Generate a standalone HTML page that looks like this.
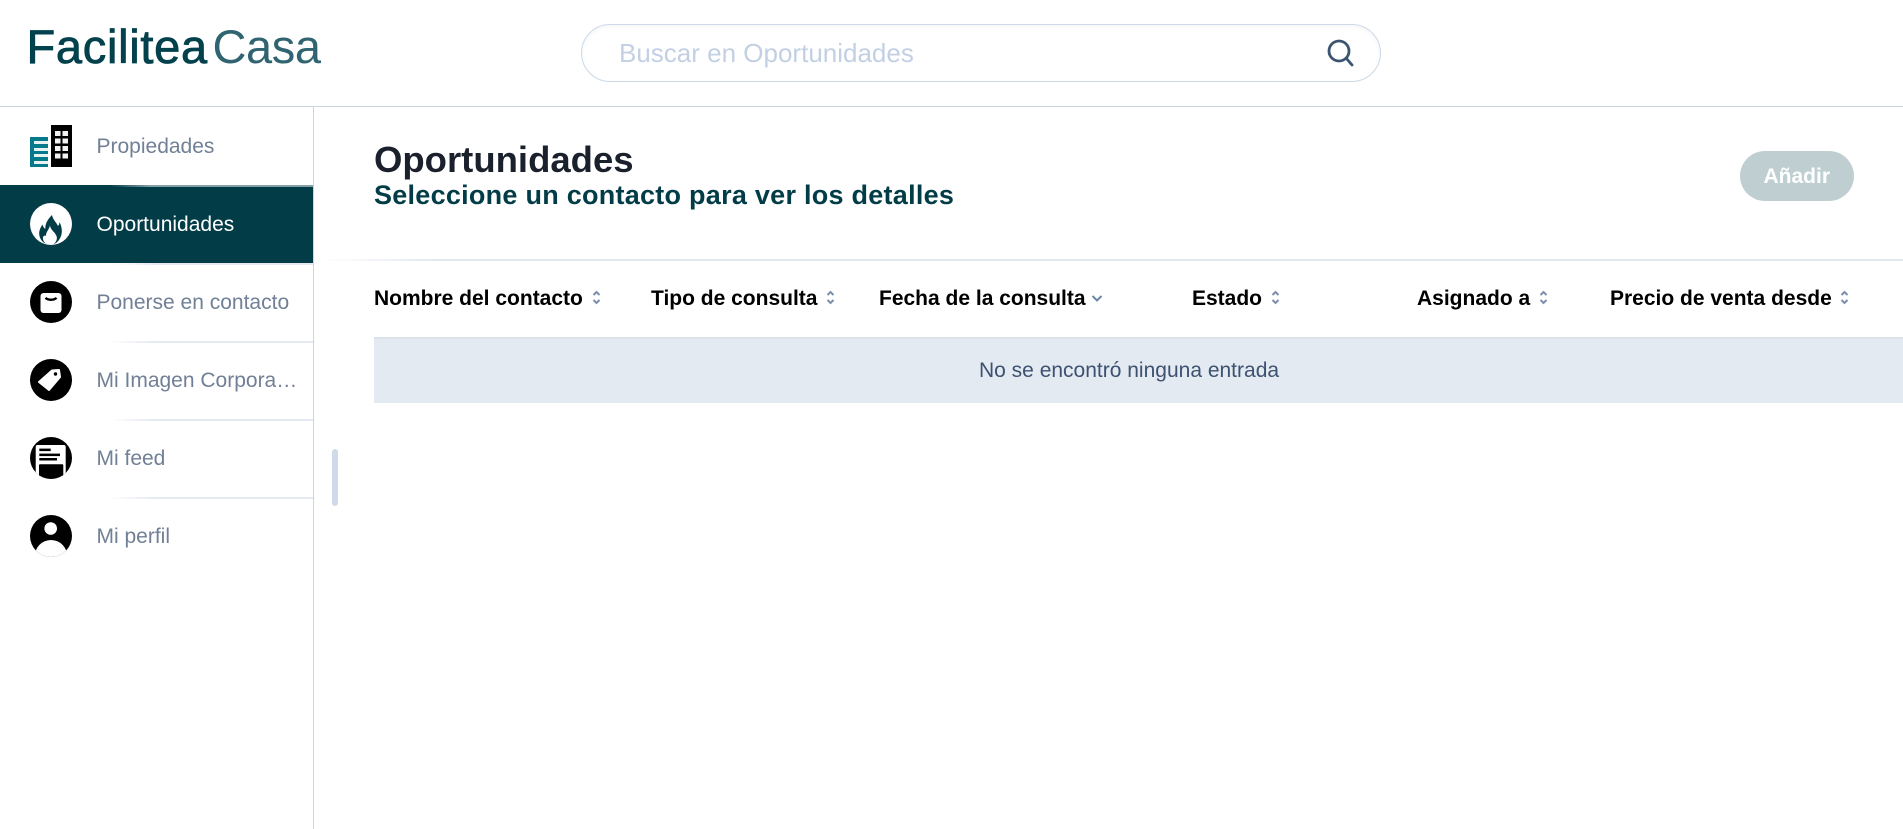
<!DOCTYPE html>
<html lang="es"><head><meta charset="utf-8"><title>Oportunidades</title>
<style>
*{box-sizing:border-box}
html,body{margin:0;padding:0;width:1903px;height:829px;overflow:hidden;background:#fff;font-family:"Liberation Sans",Arial,sans-serif}
.a{position:absolute}
.t{position:absolute;white-space:nowrap;line-height:1}
.nav{font-size:21px;color:#718096;left:96.5px}
.th{font-size:21px;font-weight:700;color:#000;top:288px}
.sep{position:absolute;left:0;width:313px;height:2px;background:linear-gradient(90deg,#fff 0,#fff 110px,#e4e9f2 155px,#e4e9f2 100%)}
svg{position:absolute;display:block}
</style></head><body>

<!-- header -->
<div class="t" style="left:26.5px;top:23px;font-size:47px;color:#03414d;-webkit-text-stroke:.8px #03414d;letter-spacing:.7px">Facilitea</div>
<div class="t" style="left:212.5px;top:23px;font-size:47px;color:#2f6470;letter-spacing:-.4px">Casa</div>
<div class="a" style="left:0;top:106px;width:1903px;height:1px;background:#cbd5e0"></div>

<div class="a" style="left:581px;top:24px;width:800px;height:58px;border:1px solid #cbd9e8;border-radius:29px;box-shadow:inset 0 2px 4px rgba(0,0,0,.04)"></div>
<div class="t" style="left:619px;top:39.5px;font-size:26px;color:#c3d0e4">Buscar en Oportunidades</div>
<svg style="left:1325px;top:37px" width="32" height="32" viewBox="0 0 32 32" fill="none" stroke="#3b5470" stroke-width="2.8" stroke-linecap="round"><circle cx="14" cy="14" r="10"/><path d="M21.5 21.5L27 28"/></svg>

<!-- sidebar -->
<div class="a" style="left:313px;top:106px;width:1px;height:723px;background:#cbd5e0"></div>
<div class="a" style="left:332px;top:449px;width:6px;height:57px;border-radius:3px;background:#cfdbe8"></div>

<div class="a" style="left:30px;top:137px;width:18px;height:30px;background:#047a8a"></div>
<div class="a" style="left:34px;top:141px;width:14px;height:3px;background:#e8f2f3"></div>
<div class="a" style="left:34px;top:147.5px;width:14px;height:3px;background:#e8f2f3"></div>
<div class="a" style="left:34px;top:154px;width:14px;height:3px;background:#e8f2f3"></div>
<div class="a" style="left:34px;top:160.5px;width:14px;height:3px;background:#e8f2f3"></div>
<svg style="left:51px;top:125px" width="21" height="42" viewBox="0 0 21 42"><rect width="21" height="42" fill="#000"/><g fill="#f2f2f2"><rect x="4" y="6" width="5.5" height="5"/><rect x="11.5" y="6" width="5.5" height="5"/><rect x="4" y="13.5" width="5.5" height="5"/><rect x="11.5" y="13.5" width="5.5" height="5"/><rect x="4" y="21" width="5.5" height="5"/><rect x="11.5" y="21" width="5.5" height="5"/><rect x="4" y="28.5" width="5.5" height="5"/><rect x="11.5" y="28.5" width="5.5" height="5"/></g></svg>
<div class="t nav" style="top:136px">Propiedades</div>

<div class="a" style="left:0;top:185px;width:313px;height:78px;background:#023c47"></div>
<div class="a" style="left:0;top:185px;width:313px;height:2px;background:linear-gradient(90deg,#023c47 0,#023c47 110px,#84a0a8 150px,#84a0a8 100%)"></div>
<svg style="left:30px;top:203px" width="42" height="42" viewBox="0 0 42 42"><circle cx="21" cy="21" r="21" fill="#fff"/><path fill="#023c47" d="M22 12C23 17 26.5 19.5 28 23C29 22 29.5 20.5 29.5 19C32 24 32.5 29 31 33C29.5 37 27 40 24 41L17 41C13 40 10.5 37 9.5 33C8.5 29 10 25 12.5 21.5C12.8 23.5 14 25 15.3 26C15 20 18.5 15.5 22 12Z"/><path fill="#fff" d="M20 22.5C20.5 27 25 29 26.5 33C27.8 36.5 25.5 40 23 41.5L17.5 41.5C14.5 40 12.5 37.5 13 34C14 32.5 15 32 16 33C15.8 29 18.8 27 20 22.5Z"/></svg>
<div class="t nav" style="top:214px;color:#fff">Oportunidades</div>

<div class="sep" style="top:263px"></div>
<svg style="left:30px;top:281px" width="42" height="42" viewBox="0 0 42 42"><circle cx="21" cy="21" r="21" fill="#000"/><rect x="10.5" y="12" width="21" height="20" rx="3" fill="#fff"/><path d="M15.5 16.8C18 19.4 24 19.4 26.5 16.8" fill="none" stroke="#000" stroke-width="2.4"/></svg>
<div class="t nav" style="top:292px">Ponerse en contacto</div>

<div class="sep" style="top:341px"></div>
<svg style="left:30px;top:359px" width="42" height="42" viewBox="0 0 42 42"><circle cx="21" cy="21" r="21" fill="#000"/><path fill="#fff" stroke="#fff" stroke-width="2" stroke-linejoin="round" d="M9 23L22 11.5L29 11L30 18L19 31Z"/><circle cx="25.5" cy="15" r="1.7" fill="#000"/></svg>
<div class="t nav" style="top:370px;width:203px;overflow:hidden;text-overflow:ellipsis;line-height:24px;margin-top:-1.5px">Mi Imagen Corporativa</div>

<div class="sep" style="top:419px"></div>
<svg style="left:30px;top:437px" width="42" height="42" viewBox="0 0 42 42"><defs><clipPath id="c1"><circle cx="21" cy="21" r="21"/></clipPath></defs><circle cx="21" cy="21" r="21" fill="#000"/><g clip-path="url(#c1)"><rect x="5.7" y="8" width="30" height="34" rx="2" fill="#fff"/><rect x="9" y="27.3" width="24.3" height="15" rx="1" fill="#000"/><rect x="9.3" y="11.6" width="11.4" height="2.5" fill="#000"/><rect x="9.3" y="16.6" width="20.7" height="2.5" fill="#000"/><rect x="9.3" y="21" width="17.7" height="2.5" fill="#000"/></g></svg>
<div class="t nav" style="top:448px">Mi feed</div>

<div class="sep" style="top:497px"></div>
<svg style="left:30px;top:515px" width="42" height="42" viewBox="0 0 42 42"><defs><clipPath id="c2"><circle cx="21" cy="21" r="21"/></clipPath></defs><circle cx="21" cy="21" r="21" fill="#000"/><g clip-path="url(#c2)"><circle cx="20.7" cy="13.5" r="6.3" fill="#fff"/><ellipse cx="21" cy="42" rx="16.5" ry="17" fill="#fff"/></g></svg>
<div class="t nav" style="top:526px">Mi perfil</div>

<!-- main -->
<div class="t" style="left:374px;top:142px;font-size:36.5px;font-weight:700;color:#1a202c">Oportunidades</div>
<div class="t" style="left:374px;top:182px;font-size:27px;font-weight:700;color:#023c47;letter-spacing:.26px">Seleccione un contacto para ver los detalles</div>

<div class="a" style="left:1740px;top:151px;width:114px;height:50px;border-radius:25px;background:#bfcfd1"></div>
<div class="t" style="left:1763.5px;top:166px;font-size:21px;font-weight:700;color:#fff">Añadir</div>

<div class="a" style="left:320px;top:259px;width:1583px;height:2px;background:linear-gradient(90deg,#fff 0,#e2e8f0 120px,#e2e8f0 100%)"></div>

<div class="t th" style="left:374px">Nombre del contacto</div>
<div class="t th" style="left:651px">Tipo de consulta</div>
<div class="t th" style="left:879px">Fecha de la consulta</div>
<div class="t th" style="left:1192px">Estado</div>
<div class="t th" style="left:1417px">Asignado a</div>
<div class="t th" style="left:1610px">Precio de venta desde</div>

<svg style="left:592px;top:290px" width="9" height="15" viewBox="0 0 9 15" fill="none" stroke="#7b8eab" stroke-width="2"><path d="M1.5 5L4.5 2L7.5 5M1.5 10L4.5 13L7.5 10"/></svg>
<svg style="left:826px;top:290px" width="9" height="15" viewBox="0 0 9 15" fill="none" stroke="#7b8eab" stroke-width="2"><path d="M1.5 5L4.5 2L7.5 5M1.5 10L4.5 13L7.5 10"/></svg>
<svg style="left:1091px;top:294px" width="12" height="9" viewBox="0 0 12 9" fill="none" stroke="#6a86ad" stroke-width="2"><path d="M1.5 2L6 6.5L10.5 2"/></svg>
<svg style="left:1271px;top:290px" width="9" height="15" viewBox="0 0 9 15" fill="none" stroke="#7b8eab" stroke-width="2"><path d="M1.5 5L4.5 2L7.5 5M1.5 10L4.5 13L7.5 10"/></svg>
<svg style="left:1539px;top:290px" width="9" height="15" viewBox="0 0 9 15" fill="none" stroke="#7b8eab" stroke-width="2"><path d="M1.5 5L4.5 2L7.5 5M1.5 10L4.5 13L7.5 10"/></svg>
<svg style="left:1840px;top:290px" width="9" height="15" viewBox="0 0 9 15" fill="none" stroke="#7b8eab" stroke-width="2"><path d="M1.5 5L4.5 2L7.5 5M1.5 10L4.5 13L7.5 10"/></svg>

<div class="a" style="left:374px;top:337px;width:1529px;height:66px;background:#e4eaf2;border-top:2px solid #dde3ec"></div>
<div class="t" style="left:979px;top:360px;font-size:21px;color:#3d5170">No se encontró ninguna entrada</div>
</body></html>
